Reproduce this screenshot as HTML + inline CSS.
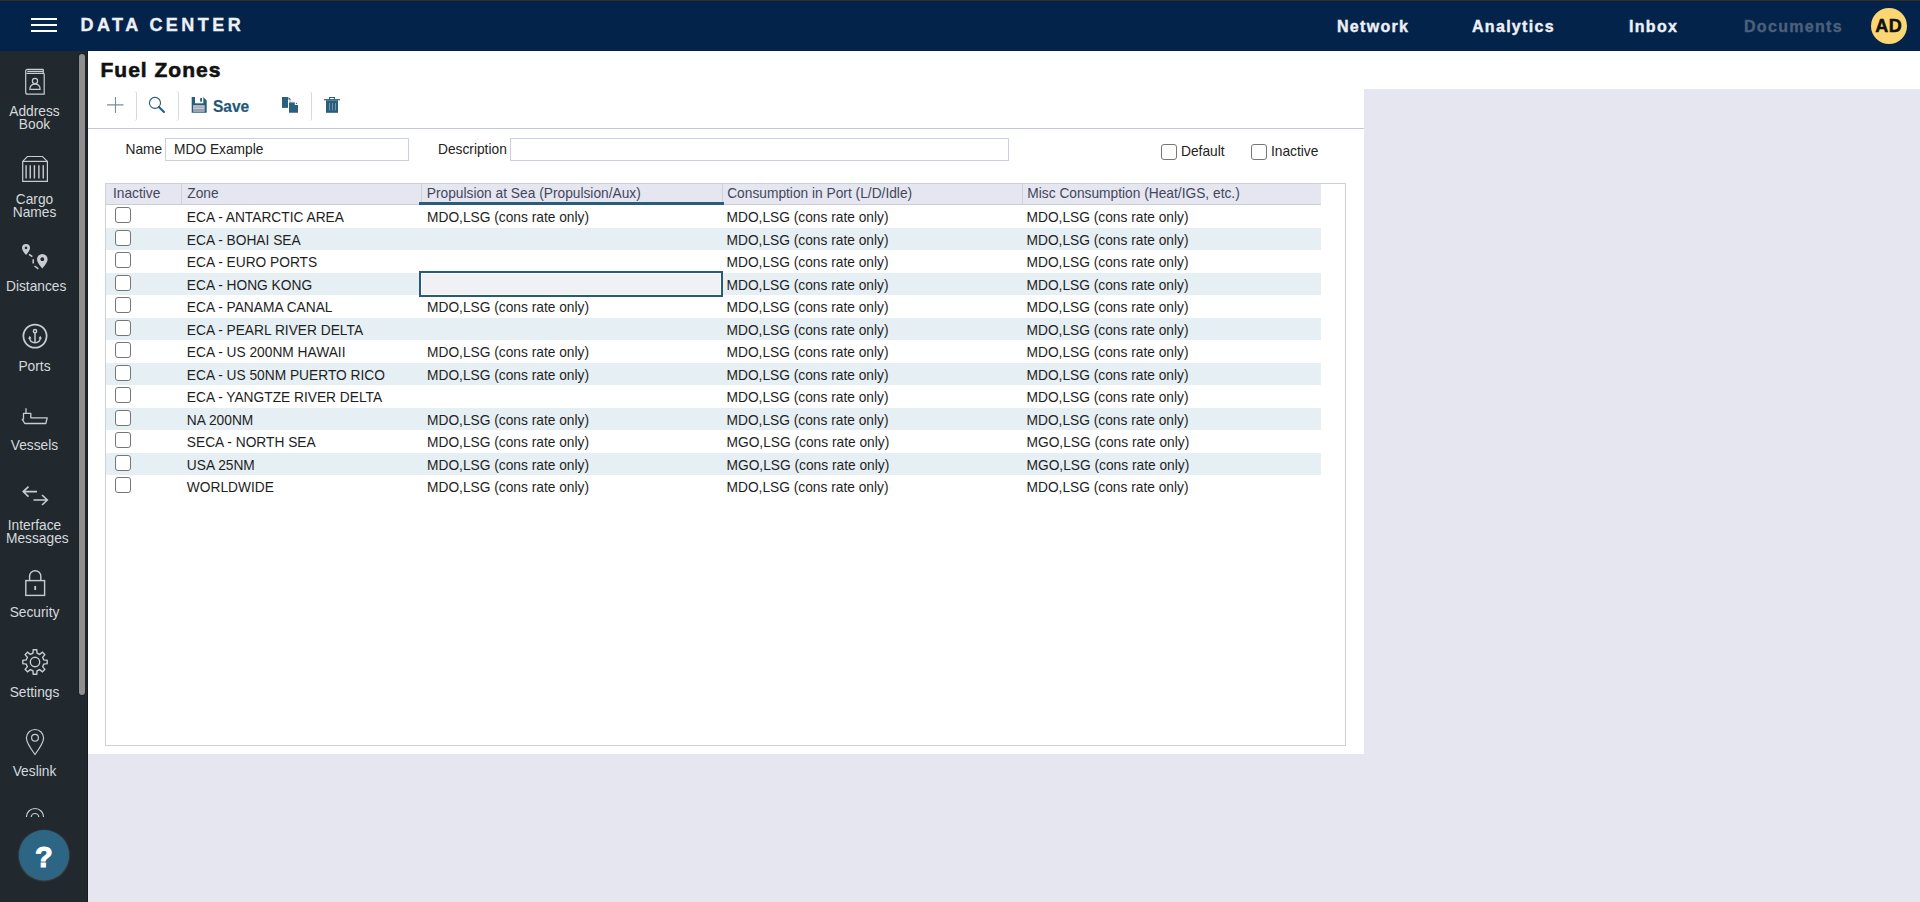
<!DOCTYPE html>
<html><head><meta charset="utf-8">
<style>
*{box-sizing:border-box}
html,body{margin:0;padding:0;width:1920px;height:902px;overflow:hidden;background:#e6e6f0;font-family:"Liberation Sans",sans-serif}
.abs{position:absolute}
#topline{left:0;top:0;width:1920px;height:1px;background:#3a2c1d}
#hdr{left:0;top:1px;width:1920px;height:50px;background:#03234a}
#burger span{position:absolute;left:31px;width:26px;height:2px;background:#fff}
#brand{left:80.5px;top:14.5px;font-size:18px;font-weight:700;letter-spacing:3.45px;-webkit-text-stroke:0.35px #eef0f6;color:#eef0f6;white-space:nowrap}
.nav{top:18px;font-size:16px;font-weight:700;letter-spacing:1.3px;-webkit-text-stroke:0.4px currentColor;color:#eef0f6;white-space:nowrap}
#avatar{left:1870.5px;top:8px;width:36px;height:36px;border-radius:50%;background:#fcd672;color:#111;font-weight:700;font-size:18px;letter-spacing:0.5px;text-indent:0.5px;-webkit-text-stroke:0.5px #111;text-align:center;line-height:36px}
#side{left:0;top:51px;width:88px;height:851px;background:#21292f}
#sideedge{left:87px;top:51px;width:1px;height:851px;background:#161d22}
#thumb{left:79px;top:54px;width:6px;height:641px;border-radius:3px;background:#8f8f8f;box-shadow:0 0 0 1px #1c2329}
.stxt{position:absolute;left:6px;width:57px;text-align:center;font-size:13.75px;line-height:12.8px;color:#d6d9dd;white-space:nowrap}
#titlebar{left:88px;top:51px;width:1832px;height:38px;background:#fff}
#panel{left:88px;top:89px;width:1276px;height:665px;background:#fff}
#title{left:100.5px;top:58px;font-size:21px;font-weight:700;letter-spacing:1px;-webkit-text-stroke:0.6px #111;color:#111;white-space:nowrap}
.sep{position:absolute;top:91px;width:4px;height:29.5px;margin-left:-3px;border-right:1.2px solid #d3d9e1;border-radius:0 3px 3px 0}
#tbline{left:88px;top:128px;width:1276px;height:1px;background:#c3cad4}
.lbl{position:absolute;font-size:13.75px;color:#222;white-space:nowrap}
.inp{position:absolute;top:138px;height:23px;border:1.25px solid #cbd1db;background:#fff}
.cb{position:absolute;width:16px;height:16px;border:1.25px solid #767676;border-radius:3px;background:#fff}
#tbl{left:105px;top:183px;width:1241px;height:563px;border:1px solid #cbd0d9;background:#fff}
#thead{left:106px;top:184px;width:1215px;height:21px;background:#e6e6f0;border-bottom:1px solid #c9ced8}
.th{position:absolute;top:186px;font-size:13.75px;color:#42465c;white-space:nowrap}
.vdiv{position:absolute;top:184px;width:1px;height:20px;background:#cdd2dc}
.row{position:absolute;left:106px;width:1215px;height:22px;background:#e6eff3}
.td{position:absolute;font-size:13.75px;color:#1e1e1e;white-space:nowrap}
#help{left:19px;top:830px;width:50px;height:50px;border-radius:50%;background:#2d6584;box-shadow:0 0.5px 2px rgba(190,190,190,.45);color:#fff;font-weight:700;font-size:29px;-webkit-text-stroke:1px #fff;text-align:center;line-height:55px;text-indent:-0.5px}
</style></head>
<body>
<div id="topline" class="abs"></div>
<div id="hdr" class="abs"></div>
<div id="burger"><span style="top:18px"></span><span style="top:24px"></span><span style="top:30px"></span></div>
<div id="brand" class="abs">DATA CENTER</div>
<div class="abs nav" style="left:1337px">Network</div>
<div class="abs nav" style="left:1472px">Analytics</div>
<div class="abs nav" style="left:1629px">Inbox</div>
<div class="abs nav" style="left:1744px;color:#4b607c">Documents</div>
<div id="avatar" class="abs">AD</div>

<div id="side" class="abs"></div>
<div id="sideedge" class="abs"></div>
<div id="thumb" class="abs"></div>
<svg class="abs" style="left:25px;top:68px" width="21" height="28" viewBox="0 0 21 28" ><g fill="none" stroke="#c9ccd1" stroke-width="1.2"><path d="M18.3 1.3 H2.6 Q0.7 1.3 0.7 3.3 V24.2 Q0.7 26.2 2.6 26.2 H19.2 V5.4"/><path d="M2.3 3.4 H18.3 M18.3 1.3 V5.4 M1.4 5.4 H19.2"/><circle cx="10" cy="12.9" r="2.6"/><path d="M4.9 21.3 Q4.9 16.1 10 16.1 Q15.1 16.1 15.1 21.3 Z"/></g></svg>
<div class="stxt" style="top:105.8px">Address<br>Book</div>
<svg class="abs" style="left:21px;top:155px" width="28" height="28" viewBox="0 0 28 28" ><g fill="none" stroke="#c9ccd1" stroke-width="1.2"><path d="M6.4 1.5 H21.5 L26.4 6.4 V26.4 H1.7 V6.4 Z"/><path d="M1.7 6.4 H26.4"/><path d="M5.1 10.2 V23.4 M9.25 10.2 V23.4 M13.4 10.2 V23.4 M17.9 10.2 V23.4 M22.25 10.2 V23.4" stroke-width="1.4"/></g></svg>
<div class="stxt" style="top:193.8px">Cargo<br>Names</div>
<svg class="abs" style="left:20px;top:242px" width="30" height="30" viewBox="0 0 30 30" ><g fill="#c9ccd1"><path d="M6 2 a4 4 0 0 1 4 4 c0 2.8 -4 7 -4 7 s-4 -4.2 -4 -7 a4 4 0 0 1 4 -4 z M6 4.6 a1.3 1.3 0 1 0 0.01 0 z" fill-rule="evenodd"/><path d="M22.3 12 a5.3 5.3 0 0 1 5.3 5.3 c0 3.6 -5.3 9.3 -5.3 9.3 s-5.3 -5.7 -5.3 -9.3 a5.3 5.3 0 0 1 5.3 -5.3 z M22.3 15.3 a1.9 1.9 0 1 0 0.01 0 z" fill-rule="evenodd"/></g><g stroke="#c9ccd1" stroke-width="1.5" stroke-linecap="butt"><path d="M9 12.3 L12.4 14.6"/><path d="M13.2 17.2 V21.6"/><path d="M14.5 24 L18.3 26.8"/></g></svg>
<div class="stxt" style="top:280.8px">Distances</div>
<svg class="abs" style="left:20px;top:321px" width="30" height="30" viewBox="0 0 30 30" ><g fill="none" stroke="#c9ccd1" stroke-width="1.5"><circle cx="15" cy="15.1" r="11.6" stroke-width="1.75"/><circle cx="15" cy="10.2" r="1.6"/><path d="M15 11.8 V21.5"/><path d="M9.5 16.5 Q10 21.7 15 21.7 Q20 21.7 20.5 16.5"/></g><g fill="#c9ccd1"><path d="M8.3 18 L9.5 14.8 L11.6 17.2 Z"/><path d="M21.7 18 L20.5 14.8 L18.4 17.2 Z"/></g></svg>
<div class="stxt" style="top:360.8px">Ports</div>
<svg class="abs" style="left:20px;top:406px" width="30" height="20" viewBox="0 0 30 20" ><g fill="none" stroke="#c9ccd1" stroke-width="1.3" stroke-linejoin="round"><path d="M6 2.3 V7.3 H3.5 V13 L2.3 13.4 L4.8 17.5 H25.8 L27.2 11.8 H10.8 V7.3 H6"/></g></svg>
<div class="stxt" style="top:439.8px">Vessels</div>
<svg class="abs" style="left:20px;top:484px" width="30" height="24" viewBox="0 0 30 24" ><g fill="none" stroke="#c9ccd1" stroke-width="1.6"><path d="M17 7.6 H3.5 M8.5 2.6 L3.2 7.6 L8.5 12.6"/><path d="M13.5 16 H27 M22 11 L27.3 16 L22 21"/></g></svg>
<div class="stxt" style="top:519.8px">Interface<br>Messages</div>
<svg class="abs" style="left:20px;top:568px" width="30" height="30" viewBox="0 0 30 30" ><g fill="none" stroke="#c9ccd1" stroke-width="1.4"><rect x="5.8" y="12.6" width="18.8" height="14.8"/><path d="M9.6 12.4 V8.3 A5.6 5.6 0 0 1 20.8 8.3 V12.4"/></g><path d="M15.2 18 V22" stroke="#c9ccd1" stroke-width="1.8"/></svg>
<div class="stxt" style="top:606.8px">Security</div>
<svg class="abs" style="left:20px;top:647px" width="30" height="30" viewBox="0 0 30 30" ><g fill="none" stroke="#c9ccd1" stroke-width="1.4" stroke-linejoin="miter"><path d="M13.29 2.82 L16.71 2.82 L17.10 6.25 L19.70 7.33 L22.40 5.18 L24.82 7.60 L22.67 10.30 L23.75 12.90 L27.18 13.29 L27.18 16.71 L23.75 17.10 L22.67 19.70 L24.82 22.40 L22.40 24.82 L19.70 22.67 L17.10 23.75 L16.71 27.18 L13.29 27.18 L12.90 23.75 L10.30 22.67 L7.60 24.82 L5.18 22.40 L7.33 19.70 L6.25 17.10 L2.82 16.71 L2.82 13.29 L6.25 12.90 L7.33 10.30 L5.18 7.60 L7.60 5.18 L10.30 7.33 L12.90 6.25 Z"/><circle cx="15" cy="15" r="4.7"/></g></svg>
<div class="stxt" style="top:686.8px">Settings</div>
<svg class="abs" style="left:24px;top:727px" width="22" height="30" viewBox="0 0 22 30" ><g fill="none" stroke="#c9ccd1" stroke-width="1.2"><path d="M11 2.5 A8.6 8.6 0 0 1 19.6 11.1 C19.6 16 11 27.5 11 27.5 C11 27.5 2.4 16 2.4 11.1 A8.6 8.6 0 0 1 11 2.5 Z"/><circle cx="11" cy="10.8" r="3.4"/></g></svg>
<div class="stxt" style="top:765.8px">Veslink</div>
<div class="abs" style="left:0;top:800px;width:79px;height:17px;overflow:hidden"><svg class="abs" style="left:24px;top:5.5px" width="22" height="30" viewBox="0 0 22 30" ><g fill="none" stroke="#c9ccd1" stroke-width="1.2"><path d="M11 2.5 A8.6 8.6 0 0 1 19.6 11.1 C19.6 16 11 27.5 11 27.5 C11 27.5 2.4 16 2.4 11.1 A8.6 8.6 0 0 1 11 2.5 Z"/><circle cx="11" cy="11.3" r="3.8"/></g></svg></div>

<div id="titlebar" class="abs"></div>
<div id="panel" class="abs"></div>
<div id="title" class="abs">Fuel Zones</div>
<svg class="abs" style="left:107px;top:97px" width="17" height="17" viewBox="0 0 17 17" ><path d="M0 7.9 H16.5 M8.5 0 V16" stroke="#7d8a9b" stroke-width="1.1"/></svg>
<div class="sep" style="left:136px"></div>
<svg class="abs" style="left:147px;top:95px" width="20" height="20" viewBox="0 0 20 20" ><g fill="none" stroke="#275d7d"><circle cx="8" cy="7.9" r="5.5" stroke-width="1.1"/><path d="M11.9 11.9 L17 16.9" stroke-width="2.1" stroke-linecap="round"/></g></svg>
<div class="sep" style="left:178px"></div>
<svg class="abs" style="left:191px;top:97px" width="17" height="17" viewBox="0 0 17 17" ><path d="M0.7 0 H12.3 L15.7 3.4 V15.7 H0.7 Z" fill="#275d7d"/><rect x="4" y="0" width="8.3" height="6.3" fill="#fff"/><rect x="9.2" y="1" width="1.8" height="3.7" fill="#275d7d"/><rect x="2.1" y="8.2" width="11.5" height="6.5" fill="#c6cad4"/><rect x="2.1" y="9.6" width="11.5" height="1.2" fill="#a3a9b7"/><rect x="2.1" y="12.2" width="11.5" height="1.6" fill="#9096a6"/></svg>
<div class="abs" style="left:212.5px;top:97px;font-size:16.5px;font-weight:700;transform:scaleX(0.94);transform-origin:0 0;-webkit-text-stroke:0.2px #1f5878;color:#1f5878">Save</div>
<svg class="abs" style="left:281px;top:96px" width="18" height="18" viewBox="0 0 18 18" ><path d="M1 1 H7 V11.9 H1 Z" fill="#2b5f7f"/><path d="M7.5 1 L10.2 3.8 H7.5 Z" fill="#2b5f7f"/><rect x="7.8" y="3.9" width="2.3" height="2.4" fill="#d5dae0"/><rect x="8" y="5.6" width="5.8" height="0.9" fill="#c4cbd3"/><path d="M8 6.4 H13.8 V9.1 H17 V16.8 H8 Z" fill="#2b5f7f"/><circle cx="15.5" cy="7.4" r="0.7" fill="#6a5a80"/></svg>
<div class="sep" style="left:311px"></div>
<svg class="abs" style="left:323px;top:96px" width="18" height="18" viewBox="0 0 18 18" ><path d="M1 3.1 H17 V4.3 H1 Z" fill="#275d7d"/><path d="M6 1 H12 V3.2 H10.9 V2 H7.1 V3.2 H6 Z" fill="#275d7d"/><path d="M3 4.3 H15 V16.8 H3 Z" fill="#275d7d"/><path d="M6.5 7 V14.5 M9.5 7 V14.5 M12.5 7 V14.5" stroke="#7f98ab" stroke-width="0.9"/></svg>
<div id="tbline" class="abs"></div>

<div class="lbl" style="left:125.5px;top:142px">Name</div>
<div class="inp" style="left:165px;width:244px"></div>
<div class="lbl" style="left:174px;top:142px">MDO Example</div>
<div class="lbl" style="left:438px;top:142px">Description</div>
<div class="inp" style="left:510px;width:499px"></div>
<div class="cb" style="left:1161px;top:144px"></div>
<div class="lbl" style="left:1181px;top:143.5px">Default</div>
<div class="cb" style="left:1251px;top:144px"></div>
<div class="lbl" style="left:1271px;top:143.5px">Inactive</div>

<div id="tbl" class="abs"></div>
<div id="thead" class="abs"></div>
<div class="th" style="left:113px">Inactive</div>
<div class="vdiv" style="left:181px"></div>
<div class="th" style="left:187.3px">Zone</div>
<div class="vdiv" style="left:421px"></div>
<div class="th" style="left:426.8px">Propulsion at Sea (Propulsion/Aux)</div>
<div class="vdiv" style="left:721.5px"></div>
<div class="th" style="left:727.2px">Consumption in Port (L/D/Idle)</div>
<div class="vdiv" style="left:1021.5px"></div>
<div class="th" style="left:1027.3px">Misc Consumption (Heat/IGS, etc.)</div>
<div class="abs" style="left:419px;top:202px;width:305px;height:3px;background:#285e7c"></div>
<div class="cb" style="left:115px;top:207.0px"></div>
<div class="td" style="left:186.8px;top:210.0px">ECA - ANTARCTIC AREA</div>
<div class="td" style="left:427px;top:210.0px">MDO,LSG (cons rate only)</div>
<div class="td" style="left:726.5px;top:210.0px">MDO,LSG (cons rate only)</div>
<div class="td" style="left:1026.5px;top:210.0px">MDO,LSG (cons rate only)</div>
<div class="row" style="top:227.5px"></div>
<div class="cb" style="left:115px;top:229.5px"></div>
<div class="td" style="left:186.8px;top:232.5px">ECA - BOHAI SEA</div>
<div class="td" style="left:726.5px;top:232.5px">MDO,LSG (cons rate only)</div>
<div class="td" style="left:1026.5px;top:232.5px">MDO,LSG (cons rate only)</div>
<div class="cb" style="left:115px;top:252.0px"></div>
<div class="td" style="left:186.8px;top:255.0px">ECA - EURO PORTS</div>
<div class="td" style="left:726.5px;top:255.0px">MDO,LSG (cons rate only)</div>
<div class="td" style="left:1026.5px;top:255.0px">MDO,LSG (cons rate only)</div>
<div class="row" style="top:272.5px"></div>
<div class="abs" style="left:419px;top:270.5px;width:304px;height:26px;border:2px solid #265c7a;background:#eff1f4;box-shadow:inset 0 0 0 1px #fff"></div>
<div class="cb" style="left:115px;top:274.5px"></div>
<div class="td" style="left:186.8px;top:277.5px">ECA - HONG KONG</div>
<div class="td" style="left:726.5px;top:277.5px">MDO,LSG (cons rate only)</div>
<div class="td" style="left:1026.5px;top:277.5px">MDO,LSG (cons rate only)</div>
<div class="cb" style="left:115px;top:297.0px"></div>
<div class="td" style="left:186.8px;top:300.0px">ECA - PANAMA CANAL</div>
<div class="td" style="left:427px;top:300.0px">MDO,LSG (cons rate only)</div>
<div class="td" style="left:726.5px;top:300.0px">MDO,LSG (cons rate only)</div>
<div class="td" style="left:1026.5px;top:300.0px">MDO,LSG (cons rate only)</div>
<div class="row" style="top:317.5px"></div>
<div class="cb" style="left:115px;top:319.5px"></div>
<div class="td" style="left:186.8px;top:322.5px">ECA - PEARL RIVER DELTA</div>
<div class="td" style="left:726.5px;top:322.5px">MDO,LSG (cons rate only)</div>
<div class="td" style="left:1026.5px;top:322.5px">MDO,LSG (cons rate only)</div>
<div class="cb" style="left:115px;top:342.0px"></div>
<div class="td" style="left:186.8px;top:345.0px">ECA - US 200NM HAWAII</div>
<div class="td" style="left:427px;top:345.0px">MDO,LSG (cons rate only)</div>
<div class="td" style="left:726.5px;top:345.0px">MDO,LSG (cons rate only)</div>
<div class="td" style="left:1026.5px;top:345.0px">MDO,LSG (cons rate only)</div>
<div class="row" style="top:362.5px"></div>
<div class="cb" style="left:115px;top:364.5px"></div>
<div class="td" style="left:186.8px;top:367.5px">ECA - US 50NM PUERTO RICO</div>
<div class="td" style="left:427px;top:367.5px">MDO,LSG (cons rate only)</div>
<div class="td" style="left:726.5px;top:367.5px">MDO,LSG (cons rate only)</div>
<div class="td" style="left:1026.5px;top:367.5px">MDO,LSG (cons rate only)</div>
<div class="cb" style="left:115px;top:387.0px"></div>
<div class="td" style="left:186.8px;top:390.0px">ECA - YANGTZE RIVER DELTA</div>
<div class="td" style="left:726.5px;top:390.0px">MDO,LSG (cons rate only)</div>
<div class="td" style="left:1026.5px;top:390.0px">MDO,LSG (cons rate only)</div>
<div class="row" style="top:407.5px"></div>
<div class="cb" style="left:115px;top:409.5px"></div>
<div class="td" style="left:186.8px;top:412.5px">NA 200NM</div>
<div class="td" style="left:427px;top:412.5px">MDO,LSG (cons rate only)</div>
<div class="td" style="left:726.5px;top:412.5px">MDO,LSG (cons rate only)</div>
<div class="td" style="left:1026.5px;top:412.5px">MDO,LSG (cons rate only)</div>
<div class="cb" style="left:115px;top:432.0px"></div>
<div class="td" style="left:186.8px;top:435.0px">SECA - NORTH SEA</div>
<div class="td" style="left:427px;top:435.0px">MDO,LSG (cons rate only)</div>
<div class="td" style="left:726.5px;top:435.0px">MGO,LSG (cons rate only)</div>
<div class="td" style="left:1026.5px;top:435.0px">MGO,LSG (cons rate only)</div>
<div class="row" style="top:452.5px"></div>
<div class="cb" style="left:115px;top:454.5px"></div>
<div class="td" style="left:186.8px;top:457.5px">USA 25NM</div>
<div class="td" style="left:427px;top:457.5px">MDO,LSG (cons rate only)</div>
<div class="td" style="left:726.5px;top:457.5px">MGO,LSG (cons rate only)</div>
<div class="td" style="left:1026.5px;top:457.5px">MGO,LSG (cons rate only)</div>
<div class="cb" style="left:115px;top:477.0px"></div>
<div class="td" style="left:186.8px;top:480.0px">WORLDWIDE</div>
<div class="td" style="left:427px;top:480.0px">MDO,LSG (cons rate only)</div>
<div class="td" style="left:726.5px;top:480.0px">MDO,LSG (cons rate only)</div>
<div class="td" style="left:1026.5px;top:480.0px">MDO,LSG (cons rate only)</div>

<div id="help" class="abs">?</div>
</body></html>
